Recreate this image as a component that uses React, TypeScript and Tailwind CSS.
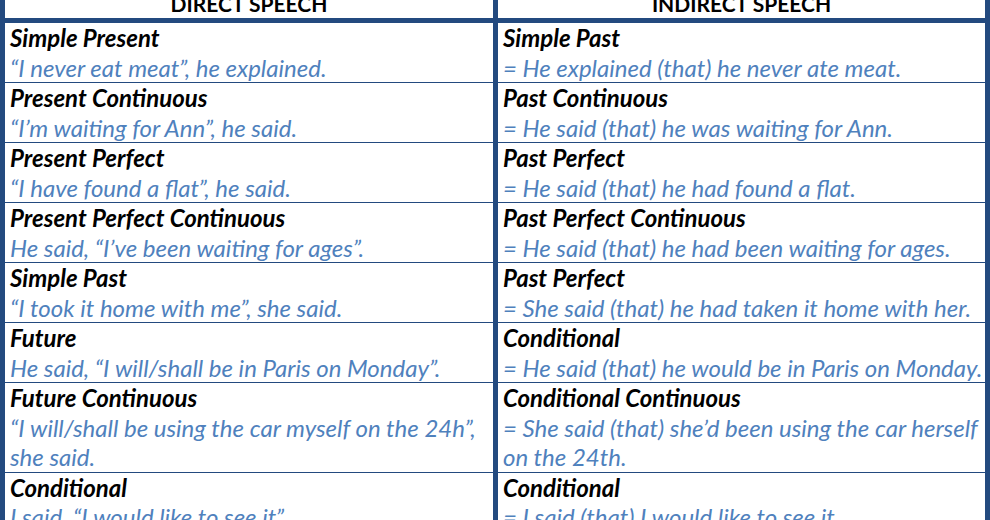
import React from "react";

type Row = { l: [string, string[]]; r: [string, string[]] };

const rows: Row[] = [
  { l: ["Simple Present", ["“I never eat meat”, he explained."]], r: ["Simple Past", ["= He explained (that) he never ate meat."]] },
  { l: ["Present Continuous", ["“I’m waiting for Ann”, he said."]], r: ["Past Continuous", ["= He said (that) he was waiting for Ann."]] },
  { l: ["Present Perfect", ["“I have found a flat”, he said."]], r: ["Past Perfect", ["= He said (that) he had found a flat."]] },
  { l: ["Present Perfect Continuous", ["He said, “I’ve been waiting for ages”."]], r: ["Past Perfect Continuous", ["= He said (that) he had been waiting for ages."]] },
  { l: ["Simple Past", ["“I took it home with me”, she said."]], r: ["Past Perfect", ["= She said (that) he had taken it home with her."]] },
  { l: ["Future", ["He said, “I will/shall be in Paris on Monday”."]], r: ["Conditional", ["= He said (that) he would be in Paris on Monday."]] },
  { l: ["Future Continuous", ["“I will/shall be using the car myself on the 24h”,", "she said."]], r: ["Conditional Continuous", ["= She said (that) she’d been using the car herself", "on the 24th."]] },
  { l: ["Conditional", ["I said, “I would like to see it”."]], r: ["Conditional", ["= I said (that) I would like to see it."]] },
];

function Cell({ title, lines }: { title: string; lines: string[] }) {
  return (
    <>
      <div className="font-bold italic text-black whitespace-nowrap">{title}</div>
      {lines.map((t, i) => (
        <div key={i} className="italic text-[#4f81bd] whitespace-nowrap">{t}</div>
      ))}
    </>
  );
}

export default function App() {
  return (
    <div className="w-[990px] h-[520px] overflow-hidden bg-white text-[24px] leading-[29.5px] font-['Lato','Noto_Sans',sans-serif]">
      <div className="border-x-[5px] border-[#234a7f] min-h-[520px]">
        <div className="flex h-[18px] border-b-[5px] border-[#234a7f] box-content">
          <div className="w-[493px] border-r-[5px] border-[#234a7f] flex justify-center">
            <span className="font-bold text-black text-[21px] mt-[-11px] h-[30px]">DIRECT SPEECH</span>
          </div>
          <div className="flex-1 flex justify-center">
            <span className="font-bold text-black text-[21px] mt-[-11px] h-[30px]">INDIRECT SPEECH</span>
          </div>
        </div>
        {rows.map((row, i) => (
          <div key={i} className={i > 0 ? "flex border-t border-[#234a7f]" : "flex"}>
            <div className="w-[493px] shrink-0 border-r-[5px] border-[#234a7f] pl-[5px] overflow-hidden">
              <Cell title={row.l[0]} lines={row.l[1]} />
            </div>
            <div className="flex-1 min-w-0 pl-[5px] overflow-hidden">
              <Cell title={row.r[0]} lines={row.r[1]} />
            </div>
          </div>
        ))}
      </div>
    </div>
  );
}
